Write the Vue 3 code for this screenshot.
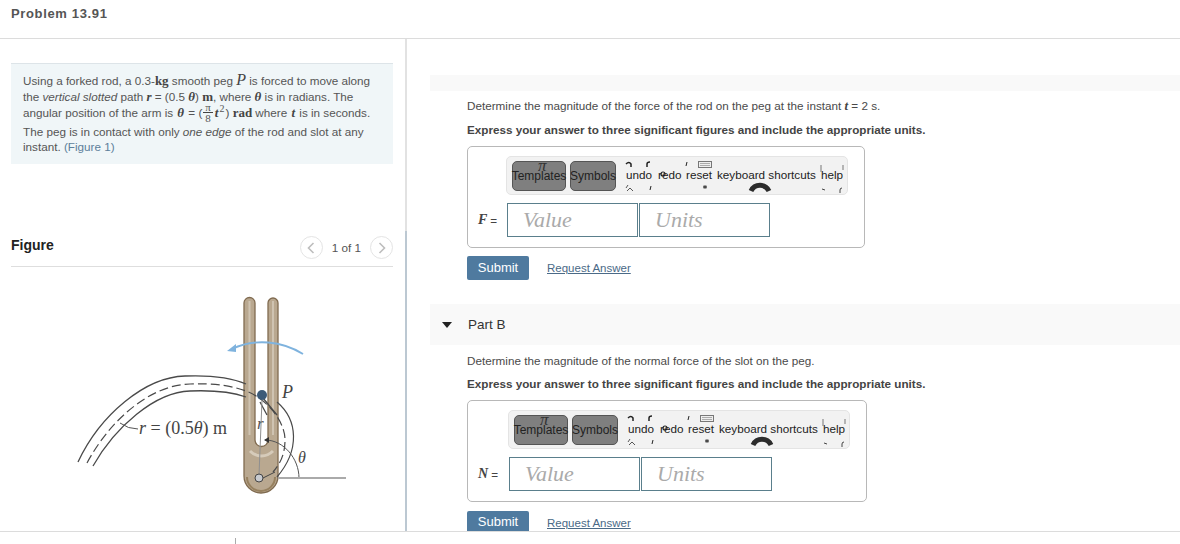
<script setup>
const parts = [
  { key: 'a', label: 'F', shifted: false },
  { key: 'b', label: 'N', shifted: true }
]
const tools = ['undo', 'redo', 'reset', 'keyboard shortcuts', 'help']
</script>

<template>
  <div class="page">
    <header class="top">Problem 13.91</header>
    <div class="main">
      <aside class="left">
        <div class="intro">
          <div class="line">Using a forked rod, a 0.3-<span class="rm">kg</span> smooth peg <i class="var big">P</i> is forced to move along</div>
          <div class="line">the <em>vertical slotted</em> path <i class="var">r</i> = (0.5 <i class="var">θ</i>) <span class="rm">m</span>, where <i class="var">θ</i> is in radians. The</div>
          <div class="line third">angular position of the arm is <i class="var">θ</i> = (<span class="frac"><span class="num">π</span><span class="den">8</span></span><i class="var">t</i><sup>2</sup>) <span class="rm">rad</span> where <i class="var">t</i> is in seconds.</div>
          <div class="line fourth">The peg is in contact with only <em>one edge</em> of the rod and slot at any</div>
          <div class="line">instant. <span class="figlink">(Figure 1)</span></div>
        </div>
        <div class="fighead">
          <span class="figtitle">Figure</span>
          <div class="pager">
            <span class="circle"><svg width="8" height="12" viewBox="0 0 8 12"><path d="M6.5 1 L1.5 6 L6.5 11" fill="none" stroke="#bdbdbd" stroke-width="1.6"/></svg></span>
            <span class="count">1 of 1</span>
            <span class="circle"><svg width="8" height="12" viewBox="0 0 8 12"><path d="M1.5 1 L6.5 6 L1.5 11" fill="none" stroke="#bdbdbd" stroke-width="1.6"/></svg></span>
          </div>
        </div>
        <svg class="figure" width="300" height="215" viewBox="0 0 300 215">
          <path d="M184 18 a5.5 5.5 0 0 1 11 0 V155 a6.5 6.5 0 0 0 13 0 V18 a5 5 0 0 1 10 0 V191 a17 17 0 0 1 -34 0 Z" fill="#b9a890" stroke="#806b50" stroke-width="1.3"/>
          <path d="M189.500 16 V150 M213 16 V150" stroke="#cfc3b1" stroke-width="2" fill="none"/>
          <path d="M190 166 Q195 171 201.500 171 Q208 171 213 166" stroke="#d6cbba" stroke-width="3" fill="none"/>
          <path d="M187 192 a14 14 0 0 0 28 0" stroke="#97815f" stroke-width="2" fill="none"/>
          <path d="M18 177 C40 130 85 92 125 91 C150 90 170 92 186 99 M203 113 L217 130" fill="none" stroke="#4a4a4a" stroke-width="1.300"/>
          <path d="M33 181 C55 142 95 107 130 106 C155 105 172 107 186 112 M200 117 L207 130" fill="none" stroke="#4a4a4a" stroke-width="1.300"/>
          <path d="M27 178 C50 135 90 100 130 99 C155 98 172 101 186 106 C205 113 225 135 225 155 C225 168 221 178 213 187" fill="none" stroke="#4a4a4a" stroke-width="1.200" stroke-dasharray="9 4"/>
          <path d="M217 117 C238 135 240 165 217 192" fill="none" stroke="#4a4a4a" stroke-width="1.200"/>
          <path d="M205 155 C224 155 239 174 239 193" fill="none" stroke="#555" stroke-width="1"/>
          <path d="M209 152 L204 155 L209 158 Z" fill="#333"/>
          <path d="M218 193 H286" stroke="#aaa" stroke-width="2"/>
          <path d="M199 190 L202 115" stroke="#8f8f8f" stroke-width="1"/>
          <circle cx="199" cy="193" r="4" fill="#c8cbd0" stroke="#444" stroke-width="1"/>
          <path d="M203 193 L215 187" stroke="#444" stroke-width="1"/>
          <circle cx="202" cy="110" r="5" fill="#3c5a78"/>
          <path d="M243 69 C222 56 195 53 172 64" fill="none" stroke="#7fb3de" stroke-width="1.800"/>
          <path d="M167 66 L176 59 L176 67 Z" fill="#7fb3de"/>
          <path d="M60 138 Q68 144 78 144" fill="none" stroke="#555" stroke-width="1"/>
          <text x="222" y="113" class="svgi svgp">P</text>
          <text x="197" y="144" class="svgi svgr">r</text>
          <text x="79" y="149" class="svgt">
            <tspan class="svgi">r</tspan> = (0.5<tspan class="svgi">θ</tspan>) m
          </text>
          <text x="238" y="178" class="svgi svgth">θ</text>
        </svg>
      </aside>
      <div class="divider"></div>
      <section class="right">
        <div class="band band-a"></div>
        <p class="q q-a">Determine the magnitude of the force of the rod on the peg at the instant <i class="var">t</i> = 2 s.</p>
        <p class="ex">Express your answer to three significant figures and include the appropriate units.</p>

        <template v-for="part in parts" :key="part.key">
          <div v-if="part.key === 'b'" class="band band-b">
            <span class="tri"></span>
            <span class="partname">Part B</span>
          </div>
          <template v-if="part.key === 'b'">
            <p class="q q-b">Determine the magnitude of the normal force of the slot on the peg.</p>
            <p class="ex ex-b">Express your answer to three significant figures and include the appropriate units.</p>
          </template>
          <div class="answer" :class="{ shifted: part.shifted }">
            <div class="toolbar">
              <button class="tbtn t1">Templates</button>
              <button class="tbtn t2">Symbols</button>
              <span v-for="t in tools" :key="t" class="tool" :class="'tool-' + t.slice(0, 3)">{{ t }}</span>
              <span class="pi">π</span>
              <svg class="glitch" width="342" height="38" viewBox="0 0 342 38">
                <path d="M120 7 Q123 4 125 7 V10" fill="none" stroke="#222" stroke-width="1.500"/>
                <path d="M141 10 V7 Q141 5 144 5" fill="none" stroke="#222" stroke-width="1.500"/>
                <circle cx="157" cy="17" r="2" fill="none" stroke="#222" stroke-width="1.200"/>
                <path d="M120 31 L122 28 M121 34 L124 31 L127 34" fill="none" stroke="#444" stroke-width="0.900"/>
                <path d="M144 33 L145 29" stroke="#222" stroke-width="1"/>
                <path d="M180 9 L181 5" stroke="#222" stroke-width="1"/>
                <rect x="192.500" y="4.500" width="13" height="6" fill="#eee" stroke="#777" stroke-width="1"/>
                <path d="M194 6.500 H204 M194 8.500 H204" stroke="#999" stroke-width="0.800"/>
                <path d="M199 28 L199 32 M197 29 L201 31 M201 29 L197 31" stroke="#222" stroke-width="0.800"/>
                <path d="M245 34 A10 10 0 0 1 263 34" fill="none" stroke="#2c2c2c" stroke-width="5"/>
                <path d="M315 8 V15 M337 8 V13" stroke="#777" stroke-width="1"/>
                <path d="M316 32 L319 33 M334 36 V33 Q334 31 336 31" fill="none" stroke="#444" stroke-width="1"/>
              </svg>
            </div>
            <div class="inputs">
              <span class="lab"><i class="var lv">{{ part.label }}</i> =</span>
              <span class="field">Value</span>
              <span class="field">Units</span>
            </div>
          </div>
          <div class="actions" :class="{ 'actions-b': part.shifted }">
            <button class="submit">Submit</button>
            <a class="req">Request Answer</a>
          </div>
        </template>
      </section>
    </div>
    <footer class="foot"><span class="tick"></span></footer>
  </div>
</template>

<style>
html, body { margin: 0; background: #fff; }
</style>

<style scoped>
.page { width: 1180px; height: 544px; overflow: hidden; display: flex; flex-direction: column; font-family: "Liberation Sans", Arial, sans-serif; font-size: 11.7px; color: #4a4a4a; background: #fff; }
.top { height: 38px; border-bottom: 1px solid #dcdcdc; padding-left: 11px; line-height: 28px; font-size: 13px; font-weight: bold; color: #555; letter-spacing: 0.65px; flex: none; }
.main { height: 492px; display: flex; overflow: hidden; flex: none; }
.left { width: 405px; flex: none; }
.divider { width: 2px; flex: none; background: linear-gradient(to bottom, #e2e2e2 0, #e2e2e2 192px, #bcc8d2 192px, #bcc8d2 100%); }
.intro { margin: 24px 12px 0 11px; background: #f0f6f8; border-top: 1px solid #dde4e8; padding: 9px 12px 9px; color: #555; }
.line { height: 16px; line-height: 16px; white-space: nowrap; }
.third { margin-bottom: 3px; }
.fourth { margin-bottom: -1px; }
.var { font-family: "Liberation Serif", serif; font-style: italic; font-weight: bold; font-size: 13px; line-height: 0; color: #444; }
.big { font-size: 16px; font-weight: normal; }
.rm { font-family: "Liberation Serif", serif; font-weight: bold; font-size: 13px; line-height: 0; color: #444; }
.third .var { margin: 0 1px; }
.frac { display: inline-flex; flex-direction: column; align-items: center; vertical-align: middle; font-family: "Liberation Serif", serif; font-size: 11px; line-height: 10px; margin: -8px 1px -6px; }
.num { border-bottom: 1px solid #444; padding: 0 2px; }
.den { font-weight: normal; }
sup { font-family: "Liberation Serif", serif; font-size: 10px; line-height: 0; margin-right: 1px; }
.figlink { color: #5d7f9b; }
.fighead { margin: 70px 12px 0 11px; height: 32px; border-bottom: 1px solid #dedede; display: flex; justify-content: space-between; align-items: center; }
.figtitle { font-size: 14px; font-weight: bold; color: #222; margin-top: -11px; }
.pager { display: flex; align-items: center; margin-top: -5px; }
.circle { width: 21px; height: 21px; border: 1px solid #e4e4e4; border-radius: 50%; display: flex; align-items: center; justify-content: center; }
.count { margin: 0 9px; color: #555; }
.figure { display: block; margin: 18px 0 0 60px; }
.svgi { font-family: "Liberation Serif", serif; font-style: italic; }
.svgt { font-family: "Liberation Serif", serif; font-size: 18px; fill: #444; }
.svgp { font-size: 18px; fill: #444; }
.svgr { font-size: 17px; fill: #555; }
.svgth { font-size: 16px; fill: #444; }
.right { flex: 1; min-width: 0; padding-left: 23px; overflow: hidden; }
.band { background: #f9f9f9; }
.band-a { margin-top: 36px; height: 16px; }
.band-b { margin-top: 24px; height: 41px; display: flex; align-items: center; }
.tri { width: 0; height: 0; border-left: 5.5px solid transparent; border-right: 5.5px solid transparent; border-top: 6px solid #222; margin-left: 12px; }
.partname { margin-left: 16px; font-size: 13.5px; color: #333; }
.q, .ex { margin: 0 0 0 37px; line-height: 16px; white-space: nowrap; color: #4a4a4a; }
.q-a { margin-top: 7px; }
.q-b { margin-top: 8px; }
.ex { font-weight: bold; margin-top: 8px; color: #444; }
.ex-b { margin-top: 7px; }
.answer { margin: 8px 0 0 37px; width: 396px; height: 100px; border: 1px solid #b8b8b8; border-radius: 5px; position: relative; }
.answer.shifted { width: 398px; }
.toolbar { margin: 9px 0 0 38px; width: 342px; height: 39px; box-sizing: border-box; position: relative; background: #f2f2f2; border: 1px solid #e4e4e4; border-radius: 5px; overflow: hidden; }
.shifted .toolbar { margin-left: 40px; }
.glitch { position: absolute; left: -1px; top: 0; }
.tbtn { position: absolute; top: 4px; height: 30px; padding: 0; background: #7f7f7f; border: 1px solid #555; border-radius: 5px; font: 12px "Liberation Sans", Arial, sans-serif; color: #222; white-space: nowrap; display: flex; align-items: center; justify-content: center; }
.t1 { left: 5px; width: 54px; }
.t2 { left: 63px; width: 46px; }
.pi { position: absolute; left: 31px; top: -1px; font: italic 17px "Liberation Serif", serif; color: #333; }
.tool { position: absolute; top: 11px; line-height: 14px; color: #222; white-space: nowrap; }
.tool-und { left: 119px; }
.tool-red { left: 151px; }
.tool-res { left: 179px; }
.tool-key { left: 210px; }
.tool-hel { left: 314px; }
.inputs { display: flex; align-items: stretch; margin: 8px 0 0 10px; height: 34px; }
.lab { width: 29px; display: flex; align-items: center; gap: 3px; color: #444; }
.shifted .inputs .lab { width: 31px; }
.lv { font-size: 14px; line-height: 16px; }
.field { width: 129px; height: 32px; border: 1px solid #5a7f8c; margin-right: 1px; font: italic 22px/32px "Liberation Serif", serif; color: #aaa; text-indent: 15px; background: #fff; }
.actions { margin: 8px 0 0 37px; display: flex; align-items: center; height: 24px; }
.actions-b { margin-top: 9px; }
.submit { width: 62px; height: 24px; background: #4f7a9f; color: #fff; border: 0; border-radius: 2px; font: 13px "Liberation Sans", Arial, sans-serif; padding: 0 0 2px; }
.actions-b .submit { padding-bottom: 4px; }
.req { margin-left: 18px; color: #4b6a87; text-decoration: underline; font-size: 11.5px; }
.actions-b .req { margin-top: -1px; }
.foot { flex: none; height: 13px; border-top: 1px solid #dcdcdc; position: relative; background: #fff; }
.tick { position: absolute; left: 235px; top: 6px; width: 1px; height: 7px; background: #aaa; }
</style>
